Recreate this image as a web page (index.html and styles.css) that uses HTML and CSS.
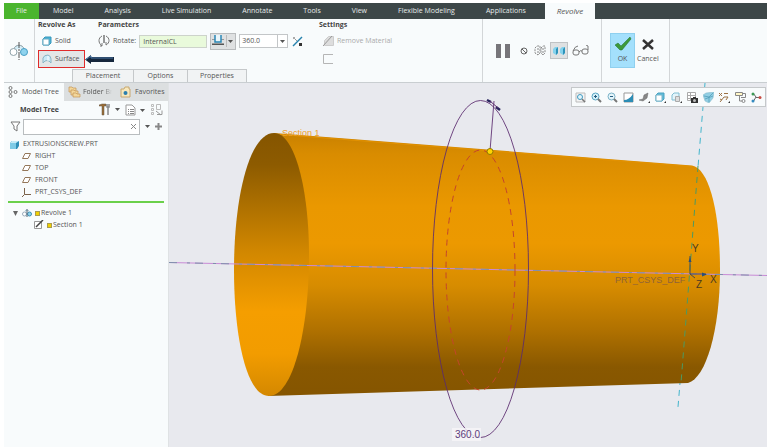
FILE: index.html
```html
<!DOCTYPE html>
<html lang="en">
<head>
    <meta charset="UTF-8">
    <meta name="viewport" content="width=device-width, initial-scale=1.0">
    <title>Revolve - EXTRUSIONSCREW.PRT</title>
    <link rel="stylesheet" href="styles.css">
</head>
<body>
    <div class="app">
        <nav class="menu">
            <button class="menu-tab file">File</button>
            <button class="menu-tab">Model</button>
            <button class="menu-tab">Analysis</button>
            <button class="menu-tab">Live Simulation</button>
            <button class="menu-tab">Annotate</button>
            <button class="menu-tab">Tools</button>
            <button class="menu-tab">View</button>
            <button class="menu-tab">Flexible Modeling</button>
            <button class="menu-tab">Applications</button>
            <button class="menu-tab current">Revolve</button>
        </nav>

        <div class="ribbon">
            <div class="ribbon-logo">
                <svg width="20" height="20" viewBox="0 0 20 20">
                    <path d="M5 8C6 3 14 3 15 8" fill="#d5eef8" stroke="#8a9aa0"/>
                    <circle cx="4.500" cy="11" r="3.500" fill="#fff" stroke="#8fa3aa"/>
                    <circle cx="15" cy="11" r="3.500" fill="#8fd3ee" stroke="#4a9fc4"/>
                    <path d="M10 1v18" stroke="#555" stroke-dasharray="6 1 2 1"/>
                </svg>
            </div>

            <div class="ribbon-main">
                <div class="options">
                    <section class="group">
                        <h2>Revolve As</h2>
                        <button class="tool solid">
                            <svg width="10" height="10" viewBox="0 0 10 10"><path d="M1 3l2-2h6v6l-2 2H1z" fill="#49b4d8" stroke="#3897bb"/><path d="M1 3h6v6H1z" fill="#fff" stroke="#69a9c0"/></svg>
                            Solid
                        </button>
                        <div class="surface-row">
                            <button class="tool surface">
                                <svg width="10" height="10" viewBox="0 0 10 10"><path d="M1 9V4q1-3 5-3 3 1 3 4v4L7 7q-2-1-4 0z" fill="#c9eaf6" stroke="#8ab4c4"/><path d="M6 2v5" stroke="#fff"/></svg>
                                Surface
                            </button>
                            <svg width="30" height="9" viewBox="0 0 30 9"><path d="M0 4.500L6 0v2h23v5H6v2z" fill="#16273d"/><path d="M1 4.500L6 1v2h22" fill="none" stroke="#4a79a8"/></svg>
                        </div>
                    </section>
                    <section class="group">
                        <h2>Parameters</h2>
                        <div class="fields">
                            <svg width="12" height="12" viewBox="0 0 12 12" fill="none" stroke="#777"><path d="M4 1C0 3 0 8 4 11M4 11V8M4 11H2M8 1c4 2 4 7 0 9M8 10V7"/><path d="M6 0v8" stroke="#333"/></svg>
                            <label for="axis">Rotate:</label>
                            <input id="axis" class="axis" type="text" value="InternalCL">
                            <button class="depth" aria-label="Depth option">
                                <svg width="22" height="12" viewBox="0 0 22 12"><path d="M0 4.500h12M0 8.500h12" stroke="#999"/><path d="M3 0v7h6V0" fill="#eaf6fb" stroke="#2b87b5" stroke-width="1.500"/><path d="M0 9.500h12" stroke="#555"/><path d="M14.500 0v12" stroke="#bbb"/><path d="M16 5h5l-2.500 3z" fill="#555"/></svg>
                            </button>
                            <div class="combo">
                                <input type="text" value="360.0" aria-label="Angle">
                                <button aria-label="Recent angles"><svg width="5" height="3" viewBox="0 0 5 3"><path d="M0 0h5L2.500 3z" fill="#555"/></svg></button>
                            </div>
                            <button class="icon" aria-label="Flip direction">
                                <svg width="11" height="11" viewBox="0 0 11 11"><path d="M1 10L10 1" stroke="#2782ad" stroke-width="1.500"/><path d="M1 1h2v2H1z" fill="#aaa"/><path d="M3 3l2 2" stroke="#999"/><path d="M7 7h3v3H7z" fill="#333"/></svg>
                            </button>
                        </div>
                    </section>
                    <section class="group">
                        <h2>Settings</h2>
                        <button class="tool" disabled>
                            <svg width="12" height="12" viewBox="0 0 12 12"><path d="M1.500 10.500v-5l4-4h5v9z" fill="#ddd" stroke="#ccc"/><path d="M0 11L9 1" stroke="#999"/></svg>
                            Remove Material
                        </button>
                        <button class="tool" disabled aria-label="Thicken sketch">
                            <svg width="12" height="10" viewBox="0 0 12 10"><path d="M10 .500H.500v9H10" fill="none" stroke="#b5b5b5"/></svg>
                        </button>
                    </section>
                </div>
                <div class="panels">
                    <button class="placement">Placement</button>
                    <button>Options</button>
                    <button class="properties">Properties</button>
                </div>
            </div>

            <div class="preview">
                <button class="icon" aria-label="Pause"><svg width="14" height="14" viewBox="0 0 14 14"><path d="M0 0h5v14H0zM9 0h5v14H9z" fill="#77757a"/></svg></button>
                <button class="icon" aria-label="No preview"><svg width="8" height="8" viewBox="0 0 8 8" fill="none" stroke="#666"><circle cx="4" cy="4" r="3"/><path d="M2 2l4 4"/></svg></button>
                <button class="icon" aria-label="Unattached preview"><svg width="12" height="11" viewBox="0 0 12 11" fill="none" stroke="#888" stroke-dasharray="2 1"><path d="M1 3l2-2h3v7l-2 2-3-2zM7 3l2-2h2v7l-2 2-2-2zM4 3v7M9 3v7"/></svg></button>
                <button class="icon attached" aria-label="Attached preview"><svg width="12" height="10" viewBox="0 0 12 10"><path d="M0 3l2-2h3v6L3 9 0 7z" fill="#86d2ec"/><path d="M3 3l2-2v6L3 9z" fill="#2e93ba"/><path d="M7 3l2-2h3v6l-2 2-3-2z" fill="#86d2ec"/><path d="M10 3l2-2v6l-2 2z" fill="#2e93ba"/></svg></button>
                <button class="icon" aria-label="Verify"><svg width="17" height="11" viewBox="0 0 17 11" fill="none" stroke="#777"><rect x="1" y="5" width="6" height="5" rx="2"/><rect x="10" y="4" width="6" height="5" rx="2"/><path d="M7 7q1-2 3-1M1 6Q3 1 6 1M16 5V1l-2-1"/></svg></button>
            </div>

            <div class="finish">
                <button class="ok">
                    <svg width="18" height="14" viewBox="0 0 18 14"><path d="M1 8l3-2 3 3 9-9 1 2L8 13H6z" fill="#3c9a3a" stroke="#1e6d2c" stroke-width=".5"/></svg>
                    OK
                </button>
                <button class="cancel">
                    <svg width="12" height="14" viewBox="0 0 12 14"><path d="M1 3l10 9M11 3L1 12" stroke="#333" stroke-width="2.500"/></svg>
                    Cancel
                </button>
            </div>
        </div>

        <div class="workspace">
            <aside class="sidebar">
                <div class="side-tabs">
                    <button class="active">
                        <svg width="10" height="12" viewBox="0 0 10 12" fill="none" stroke="#777"><circle cx="2.500" cy="2" r="1.500"/><circle cx="2.500" cy="6" r="1.500"/><circle cx="2.500" cy="10" r="1.500"/><circle cx="7.500" cy="6" r="1.500"/></svg>
                        <span>Model Tree</span>
                    </button>
                    <button class="folder">
                        <svg width="13" height="12" viewBox="0 0 13 12" fill="#f3d79b" stroke="#c39453" stroke-width=".7"><path d="M1 1h3l1 1h3v4H1z"/><path d="M3 4h3l1 1h3v4H3z"/><path d="M5 7h3l1 1h3v3H5z"/></svg>
                        <span>Folder Br</span>
                    </button>
                    <button class="fav">
                        <svg width="11" height="12" viewBox="0 0 11 12"><path d="M1 3h3l1-2h4v2h1v8H1z" fill="#f7e8bd" stroke="#c8a870"/><circle cx="5.500" cy="7" r="2" fill="#2b7fae"/></svg>
                        <span>Favorites</span>
                    </button>
                </div>

                <div class="tree-head">
                    <h2>Model Tree</h2>
                    <button class="icon" aria-label="Settings"><svg width="21" height="13" viewBox="0 0 21 13"><path d="M0 2l3-1h4v2H5v9H3V3H0z" fill="#9b6c35" stroke="#65584a" stroke-width=".5"/><path d="M8 1v3h2V1M9 4v8" fill="none" stroke="#888" stroke-width="1.500"/><path d="M16 5h5l-2.500 3z" fill="#555"/></svg></button>
                    <button class="icon" aria-label="Show"><svg width="20" height="12" viewBox="0 0 20 12"><path d="M1 1h6l3 3v7H1z" fill="#fff" stroke="#999"/><path d="M3 5.500h1M5 5.500h4M3 7.500h1M5 7.500h4M3 9.500h1M5 9.500h4" stroke="#888"/><path d="M15 5h5l-2.500 3z" fill="#555"/></svg></button>
                    <button class="icon" aria-label="Columns"><svg width="13" height="12" viewBox="0 0 13 12" fill="none" stroke="#bbb"><path d="M1.500.500h2v2h-2zM1.500 4.500h2v2h-2zM1.500 8.500h2v2h-2zM6.500.500h4v5h-4z"/><path d="M6 7l5 4M7 10.500h5v-4" stroke="#999"/></svg></button>
                </div>

                <div class="search">
                    <svg width="11" height="11" viewBox="0 0 11 11"><path d="M1 1h9L7 5v5L4 8V5z" fill="#fff" stroke="#777"/></svg>
                    <div class="search-box">
                        <input type="text" aria-label="Filter tree">
                        <button aria-label="Clear"><svg width="5" height="5" viewBox="0 0 5 5"><path d="M0 0l5 5M5 0L0 5" stroke="#888"/></svg></button>
                    </div>
                    <button class="icon" aria-label="Filter options"><svg width="5" height="3" viewBox="0 0 5 3"><path d="M0 0h5L2.500 3z" fill="#555"/></svg></button>
                    <button class="icon" aria-label="Add"><svg width="7" height="7" viewBox="0 0 7 7"><path d="M3.500 0v7M0 3.500h7" stroke="#888" stroke-width="2"/></svg></button>
                </div>

                <ul class="tree">
                    <li class="root"><svg width="9" height="9" viewBox="0 0 9 9"><path d="M0 3l2-2h7v5L7 9H0z" fill="#2f8fb8"/><path d="M0 3h6v6H0z" fill="#7fcbe6"/><path d="M0 3l2-2h7L6 3z" fill="#c5ebf7"/></svg>EXTRUSIONSCREW.PRT</li>
                    <li><svg width="9" height="8" viewBox="0 0 9 8"><path d="M3 1.500h5.500L6 6.500H.500z" fill="#fff" stroke="#94775a"/></svg>RIGHT</li>
                    <li><svg width="9" height="8" viewBox="0 0 9 8"><path d="M3 1.500h5.500L6 6.500H.500z" fill="#fff" stroke="#94775a"/></svg>TOP</li>
                    <li><svg width="9" height="8" viewBox="0 0 9 8"><path d="M3 1.500h5.500L6 6.500H.500z" fill="#fff" stroke="#94775a"/></svg>FRONT</li>
                    <li><svg width="9" height="9" viewBox="0 0 9 9"><path d="M2.500 0v6.500H9M2.500 6.500L0 9" fill="none" stroke="#7b624a"/></svg>PRT_CSYS_DEF</li>
                </ul>
                <hr>
                <ul class="tree features">
                    <li class="revolve">
                        <svg width="5" height="5" viewBox="0 0 5 5"><path d="M0 0h5L2.500 5z" fill="#666"/></svg>
                        <svg class="rev-icon" width="10" height="8" viewBox="0 0 10 8"><circle cx="2.500" cy="5" r="2" fill="#fff" stroke="#9ab"/><circle cx="7.500" cy="5" r="2" fill="#8fd3ee" stroke="#3b90b5"/><path d="M3 2Q5 0 7 2" fill="none" stroke="#9bc"/><path d="M5 0v8" stroke="#567"/></svg>
                        <i class="flag"></i>Revolve 1
                    </li>
                    <li class="section">
                        <svg width="10" height="10" viewBox="0 0 10 10"><path d="M.500 1.500h7v7h-7z" fill="#fff" stroke="#999"/><path d="M2 7l7-7" stroke="#444" stroke-width="1.500"/></svg>
                        <i class="flag"></i>Section 1
                    </li>
                </ul>
            </aside>

            <main class="canvas">
                <svg class="scene" viewBox="169 83 598 364" preserveAspectRatio="xMidYMid slice">
                    <defs>
                        <linearGradient id="outer" gradientUnits="userSpaceOnUse" x1="0" y1="133" x2="0" y2="396">
                            <stop offset="0" stop-color="#c98100"/>
                            <stop offset=".08" stop-color="#d98c00"/>
                            <stop offset=".28" stop-color="#ea9800"/>
                            <stop offset=".42" stop-color="#ec9900"/>
                            <stop offset=".58" stop-color="#d78c00"/>
                            <stop offset=".75" stop-color="#b07100"/>
                            <stop offset=".89" stop-color="#895800"/>
                            <stop offset="1" stop-color="#855500"/>
                        </linearGradient>
                        <linearGradient id="inner" x1="0" y1="0" x2="0" y2="1">
                            <stop offset="0" stop-color="#855500"/>
                            <stop offset=".12" stop-color="#8d5b00"/>
                            <stop offset=".45" stop-color="#d18700"/>
                            <stop offset=".68" stop-color="#f59e00"/>
                            <stop offset=".84" stop-color="#f29c00"/>
                            <stop offset="1" stop-color="#d48800"/>
                        </linearGradient>
                    </defs>

                    <path class="datum" d="M705 83L678 407"/>

                    <!-- revolved surface -->
                    <path fill="url(#outer)" d="M274 133L692 165.500C710 169 720 215 720 270C720 330 706 378 688 383L268 396z"/>
                    <path d="M280 134.500L692 166.500" stroke="#e39200"/>
                    <path fill="url(#inner)" d="M274 133C295 133 309 190 309 255C309 330 293 396 269 396C246 396 234 335 234 270C234 195 250 133 274 133z"/>
                    <path class="datum over" d="M698 166L681 383"/>

                    <path d="M169 262.500L767 275.500" stroke="#c98bd6"/>
                    <path d="M169 262.500L767 275.500" stroke="#7f90ac" stroke-dasharray="8 10 3 5"/>

                    <!-- 360 degree handle -->
                    <ellipse class="mid-edge" cx="480.500" cy="270" rx="34.500" ry="120"/>
                    <ellipse class="ring" cx="480.500" cy="269" rx="48" ry="168.500"/>
                    <path class="ring" d="M490 151L494 101"/>
                    <path d="M487 100l4 2M496 107l4 3" stroke="#29245d" stroke-width="2.500"/>
                    <path d="M490 101l8 7" stroke="#5b2a6e"/>
                    <circle cx="490" cy="151.500" r="3" fill="#ffd500" stroke="#8f7900"/>
                    <rect x="452" y="428" width="29" height="13" fill="#f6f5f8" fill-opacity=".8"/>
                    <text class="angle" x="455" y="438">360.0</text>

                    <text class="sec-name" x="282" y="136">Section 1</text>
                    <text class="csys" x="615" y="283">PRT_CSYS_DEF</text>
                    <path d="M690 274V256M690 274h16M690 274l5 4" stroke="#4d4a4a" fill="none"/>
                    <path d="M688.500 262l1.500-5 1.500 5zM702 272.500l5 2-5 2z" fill="#28507a"/>
                    <text class="axis-name" x="692" y="252">Y</text>
                    <text class="axis-name" x="710" y="283">X</text>
                    <text class="axis-name" x="696" y="288">Z</text>
                </svg>

                <div class="view-tools">
                    <button aria-label="Refit"><svg width="11" height="11" viewBox="0 0 11 11"><path d="M1 1h9v9H1z" fill="#f4f4f4" stroke="#bbb"/><circle cx="5" cy="5" r="2.500" fill="#e3f5fb" stroke="#3f9ac0"/><path d="M7 7l3 3" stroke="#777" stroke-width="1.500"/></svg></button>
                    <button aria-label="Zoom in"><svg width="11" height="11" viewBox="0 0 11 11"><circle cx="4.500" cy="4.500" r="3.500" fill="#d5f0f9" stroke="#58a5c4"/><path d="M3 4.500h3M4.500 3v3" stroke="#245d80"/><path d="M7 7l3 3" stroke="#777" stroke-width="2"/></svg></button>
                    <button aria-label="Zoom out"><svg width="11" height="11" viewBox="0 0 11 11"><circle cx="4.500" cy="4.500" r="3.500" fill="#e5f5fa" stroke="#7ab2c8"/><path d="M3 4.500h3" stroke="#245d80"/><path d="M7 7l3 3" stroke="#777" stroke-width="2"/></svg></button>
                    <button aria-label="Repaint"><svg width="11" height="11" viewBox="0 0 11 11"><path d="M1 1h9v9H1z" fill="#fff" stroke="#999"/><path d="M1 10V8q5 0 9-6v8z" fill="#2c8db5"/></svg></button>
                    <button aria-label="Rendering"><svg width="11" height="11" viewBox="0 0 11 11"><path d="M0 8l4-1 1-4 4-2-1 5-4 3z" fill="#888" stroke="#666" stroke-width=".5"/><path d="M11 9v2H9z" fill="#333"/></svg></button>
                    <button aria-label="Display style"><svg width="11" height="11" viewBox="0 0 11 11"><path d="M1 3l2-2h6v6L7 9H1z" fill="#60bddb" stroke="#4aa2c1"/><path d="M1 3h6v6H1z" fill="#fff" stroke="#79b4c8"/><path d="M11 9v2H9z" fill="#333"/></svg></button>
                    <button aria-label="Saved orientations"><svg width="11" height="11" viewBox="0 0 11 11"><path d="M1 3l2-2h5v7H1z" fill="#e2f4fa" stroke="#80bcd1"/><path d="M4.500 4.500h4v5h-4z" fill="#ddd" stroke="#aaa"/><path d="M11 9v2H9z" fill="#333"/></svg></button>
                    <button aria-label="View manager"><svg width="11" height="11" viewBox="0 0 11 11"><path d="M.500.500h8v8h-8zM1 3.500h8M1 6.500h8M3.500 1v8" fill="#fff" stroke="#aaa"/><path d="M4 6h7v5H4zM6 5h3v1H6z" fill="#333"/><circle cx="7.500" cy="8.500" r="1.500" fill="#bbb"/></svg></button>
                    <button aria-label="Perspective"><svg width="11" height="11" viewBox="0 0 11 11"><path d="M0 3l3-2 8-1-1 6-4 5-4-2z" fill="#92cfe4" stroke="#7fb2c5" stroke-width=".5"/><path d="M1 4l5 1 4-4M6 5v5M2 7l8-3" fill="none" stroke="#4b98b4" stroke-width=".7"/></svg></button>
                    <button aria-label="Datum display"><svg width="11" height="11" viewBox="0 0 11 11" stroke="#9b7144" fill="none"><path d="M0 1l3 3M3 1L0 4M5 1.500h4M1 10l4-5h4l-2 3M1 7l2 1"/><path d="M11 9v2H9z" fill="#333" stroke="none"/></svg></button>
                    <button aria-label="Annotation display"><svg width="11" height="11" viewBox="0 0 11 11" stroke="#888" fill="none"><path d="M.500.500h7v3h-7z" fill="#fff6c5"/><path d="M8 1.500h2.500v4H6M4.500 4v5H7"/><circle cx="8.500" cy="9" r="1.500"/></svg></button>
                    <button aria-label="Spin center"><svg width="11" height="11" viewBox="0 0 11 11"><path d="M2 1l3 4-3 5M5 5.500h5" fill="none" stroke="#666"/><circle cx="2" cy="2" r="1.500" fill="#3b9a55"/><circle cx="2" cy="9" r="1.500" fill="#348bc0"/><circle cx="9" cy="5.500" r="1.500" fill="#c84b43"/></svg></button>
                </div>
            </main>
        </div>
    </div>
</body>
</html>
```
FILE: styles.css
```css
* {
    box-sizing: border-box;
}

body {
    margin: 0;
    background-color: #fff;
    font-family: "Open Sans", "Noto Sans", sans-serif;
    font-size: 7px;
    line-height: 10px;
    color: #555;
}

.app {
    display: flex;
    flex-direction: column;
    min-height: 100vh;
    padding: 3px 0 0 4px;
}

button,
input {
    font: inherit;
    color: inherit;
    margin: 0;
    padding: 0;
    border: 0;
    border-radius: 0;
    background: none;
}

button {
    cursor: pointer;
}

svg {
    display: block;
    flex: none;
}

h2 {
    margin: 0;
    font-size: 7px;
    line-height: 12px;
    font-weight: bold;
    color: #444;
}

/* menu bar */
.menu {
    display: flex;
    height: 16px;
    background-color: #3d4748;
}

.menu-tab {
    margin-right: 3px;
    padding: 0 14px;
    color: #e6eaea;
    white-space: nowrap;
}

.menu-tab.file {
    width: 35px;
    margin-right: 0;
    padding: 0;
    background-color: #4bb52e;
}

.menu-tab.current {
    margin: 0 0 0 2px;
    padding: 0 12px;
    background-color: #f8fbfc;
    color: #555;
    font-style: italic;
    font-size: 8px;
}

/* ribbon */
.ribbon {
    display: flex;
    height: 64px;
    background-color: #f8fbfc;
    border-bottom: 1px solid #c9ced1;
}

.ribbon-logo {
    display: flex;
    align-items: center;
    justify-content: center;
    width: 31px;
    border-right: 1px solid #d3d6d8;
}

.ribbon-main {
    display: flex;
    flex-direction: column;
    justify-content: space-between;
    width: 448px;
    border-right: 1px solid #d3d6d8;
}

.options {
    display: grid;
    grid-template-columns: 60px 221px auto;
    padding-left: 3px;
}

.options h2 {
    margin-bottom: 1px;
}

.tool {
    display: flex;
    align-items: center;
    gap: 3px;
    height: 18px;
    padding: 0 4px;
    white-space: nowrap;
}

.tool:disabled {
    gap: 2px;
    color: #aaa;
}

.surface-row {
    display: flex;
    align-items: center;
}

.surface {
    flex: none;
    width: 47px;
    padding: 0 3px;
    background-color: #e4e6e7;
    border: 1px solid #e02b2b;
}

.fields {
    display: flex;
    align-items: center;
    height: 18px;
    gap: 3px;
}

.axis {
    width: 68px;
    height: 13px;
    padding: 0 3px;
    background-color: #e9fadb;
    border: 1px solid #cdd3cb;
}

.depth {
    display: flex;
    align-items: center;
    height: 17px;
    padding: 0 1px;
    background-color: #dfe1e2;
    border: 1px solid #b9bcbe;
}

.combo {
    display: flex;
    width: 49px;
    height: 14px;
    margin-right: 1px;
    background-color: #fff;
    border: 1px solid #c3c6c8;
}

.combo input {
    flex: 1;
    min-width: 0;
    padding-left: 2px;
}

.combo button {
    padding: 0 2px;
    border-left: 1px solid #c3c6c8;
}

.icon {
    display: flex;
    align-items: center;
    justify-content: center;
}

.panels {
    display: flex;
    padding-left: 37px;
}

.panels button {
    width: 54px;
    height: 13px;
    background-color: #f1f3f4;
    border: 1px solid #c5c8ca;
    border-bottom: 0;
    border-right: 0;
}

.panels .placement {
    width: 61px;
}

.panels .properties {
    width: 60px;
    border-right: 1px solid #c5c8ca;
}

.preview {
    display: flex;
    align-items: center;
    justify-content: center;
    gap: 6px;
    width: 119px;
    border-right: 1px solid #d3d6d8;
}

.preview .icon:first-child {
    margin-right: 4px;
}

.attached {
    width: 18px;
    height: 17px;
    margin: 0 -2px;
    background-color: #dfe1e2;
    border: 1px solid #bfc2c4;
}

.finish {
    display: flex;
    align-items: center;
    gap: 2px;
    width: 68px;
    padding-left: 8px;
    border-right: 1px solid #d3d6d8;
}

.finish button {
    display: flex;
    flex-direction: column;
    align-items: center;
    justify-content: center;
    gap: 3px;
    height: 35px;
}

.ok {
    width: 25px;
}

.finish .ok {
    background-color: #a4e0fc;
    border: 1px solid #8fd0ef;
}

/* model tree */
.workspace {
    display: flex;
    flex: 1;
}

.sidebar {
    width: 165px;
    flex: none;
    background-color: #f8fbfc;
    border-right: 1px solid #dfe2e4;
}

.side-tabs {
    display: flex;
    height: 18px;
    background-color: #dcdfe0;
}

.side-tabs button {
    display: flex;
    align-items: center;
    gap: 4px;
    padding-left: 4px;
    white-space: nowrap;
    overflow: hidden;
}

.side-tabs .active {
    width: 60px;
    background-color: #f8fbfc;
}

.side-tabs .folder {
    width: 48px;
    gap: 2px;
}

.folder span {
    overflow: hidden;
    -webkit-mask-image: linear-gradient(to right, #000 70%, transparent);
    mask-image: linear-gradient(to right, #000 70%, transparent);
}

.side-tabs .fav {
    padding-left: 8px;
}

.tree-head {
    display: flex;
    align-items: center;
    height: 17px;
    padding: 0 5px 0 16px;
    gap: 5px;
}

.tree-head h2 {
    flex: 1;
}

.search {
    display: flex;
    align-items: center;
    gap: 5px;
    height: 17px;
    padding-left: 6px;
}

.search-box {
    display: flex;
    align-items: center;
    width: 117px;
    height: 16px;
    margin-left: -3px;
    padding-right: 3px;
    background-color: #fff;
    border: 1px solid #b9bdbf;
}

.search-box input {
    flex: 1;
    min-width: 0;
    height: 14px;
}

.tree {
    list-style: none;
    margin: 0;
    padding: 3px 0 0;
}

.tree li {
    display: flex;
    align-items: center;
    gap: 4px;
    height: 12px;
    padding-left: 18px;
    white-space: nowrap;
}

.tree .root {
    padding-left: 6px;
}

.tree.features {
    padding-top: 0;
}

hr {
    height: 2px;
    margin: 3px 4px 4px;
    border: 0;
    background-color: #6bd04b;
}

.tree .revolve {
    padding-left: 9px;
    gap: 1px;
}

.rev-icon {
    margin: 0 2px 0 3px;
}

.tree .section {
    padding-left: 30px;
    gap: 1px;
}

.section svg {
    margin-right: 2px;
}

.flag {
    width: 5px;
    height: 5px;
    background-color: #f0d000;
    border: 1px solid #a99b52;
}

/* graphics area */
.canvas {
    position: relative;
    flex: 1;
    min-width: 0;
    background-color: #e8e9ee;
    overflow: hidden;
}

.scene {
    position: absolute;
    width: 100%;
    height: 100%;
    font-family: "Liberation Sans", Arial, sans-serif;
    font-size: 9px;
}

.datum {
    fill: none;
    stroke: #43b5cc;
    stroke-dasharray: 6 5;
}

.datum.over {
    stroke: #4b9a63;
}

.ring {
    fill: none;
    stroke: #5b2a6e;
    stroke-opacity: .85;
}

.mid-edge {
    fill: none;
    stroke: #c4452c;
    stroke-dasharray: 6 5;
}

.angle {
    font-size: 10px;
    fill: #5d3d7c;
}

.sec-name {
    fill: #eea02a;
}

.csys {
    fill: #8f6339;
}

.axis-name {
    font-size: 10px;
    fill: #4b3a20;
}

/* floats over the model */
.view-tools {
    position: absolute;
    top: 4px;
    right: 1px;
    display: flex;
    align-items: center;
    gap: 5px;
    height: 20px;
    padding: 0 3px;
    background-color: #f8fbfc;
    border: 1px solid #c5c8ca;
}
```
